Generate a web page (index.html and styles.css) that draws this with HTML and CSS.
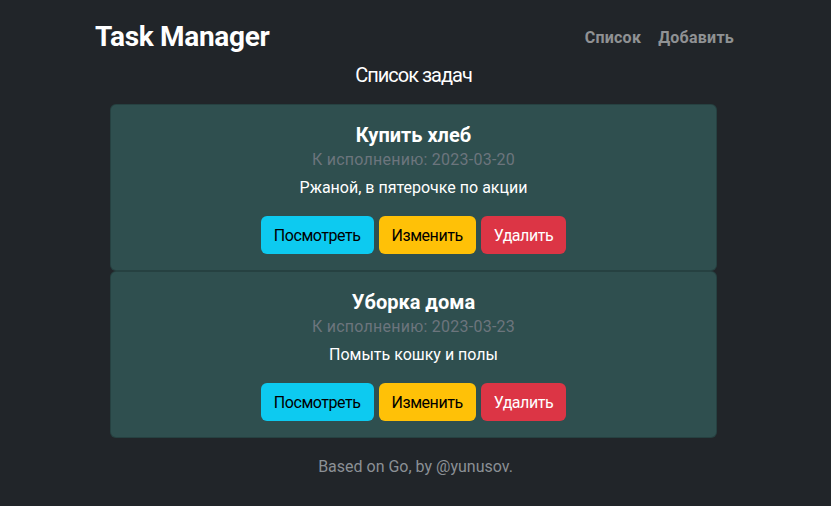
FILE: index.html
```html
<!DOCTYPE html>
<html lang="ru">
<head>
<meta charset="utf-8">
<title>Task Manager</title>
<link rel="stylesheet" href="styles.css">
</head>
<body>
<header class="navbar">
  <a class="brand" href="#">Task Manager</a>
  <nav class="nav">
    <a class="nav-link" href="#">Список</a>
    <a class="nav-link" href="#">Добавить</a>
  </nav>
</header>
<main class="content">
  <h2 class="page-title">Список задач</h2>
  <div class="card">
    <div class="card-body">
      <h5 class="card-title">Купить хлеб</h5>
      <h6 class="card-subtitle">К исполнению: 2023-03-20</h6>
      <p class="card-text">Ржаной, в пятерочке по акции</p>
      <div class="actions">
        <a class="btn btn-info" href="#">Посмотреть</a>
        <a class="btn btn-warning" href="#">Изменить</a>
        <a class="btn btn-danger" href="#">Удалить</a>
      </div>
    </div>
  </div>
  <div class="card">
    <div class="card-body">
      <h5 class="card-title">Уборка дома</h5>
      <h6 class="card-subtitle">К исполнению: 2023-03-23</h6>
      <p class="card-text">Помыть кошку и полы</p>
      <div class="actions">
        <a class="btn btn-info" href="#">Посмотреть</a>
        <a class="btn btn-warning" href="#">Изменить</a>
        <a class="btn btn-danger" href="#">Удалить</a>
      </div>
    </div>
  </div>
</main>
<footer class="footer">Based on Go, by @yunusov.</footer>
</body>
</html>
```
FILE: styles.css
```css
* { box-sizing: border-box; }
html, body { margin: 0; padding: 0; }
body {
  background: #212529;
  color: #dee2e6;
  font-family: Roboto, "Noto Sans", sans-serif;
  font-size: 16px;
  line-height: 1.5;
  min-height: 506px;
}
a { text-decoration: none; }
.navbar {
  display: flex;
  align-items: center;
  justify-content: space-between;
  padding: 20px 97px 0 95px;
}
.brand {
  color: #fff;
  font-size: 28px;
  font-weight: 700;
  line-height: 34px;
  letter-spacing: -0.3px;
}
.nav {
  display: flex;
  gap: 17px;
  padding-top: 2px;
}
.nav-link {
  color: rgba(255,255,255,.5);
  font-weight: 700;
  line-height: 24px;
  letter-spacing: 0.25px;
}
.content {
  width: 607px;
  margin-left: calc(50% - 305.5px);
}
.page-title {
  margin: 9px 0 17px;
  text-align: center;
  color: #fff;
  font-size: 20px;
  font-weight: 400;
  line-height: 24px;
  letter-spacing: -1px;
}
.card {
  background: #2f4f4f;
  border: 1px solid rgba(0,0,0,.175);
  border-radius: 6px;
  text-align: center;
}
.card-body { padding: 16px; }
.card-title {
  margin: 2px 0 7px;
  color: #fff;
  font-size: 20px;
  font-weight: 700;
  line-height: 24px;
}
.card-subtitle {
  margin: -4px 0 7px;
  color: #6c757d;
  font-size: 16px;
  font-weight: 400;
  line-height: 19px;
  letter-spacing: 0.25px;
}
.card-text {
  margin: 0 0 16px;
  color: #fff;
}
.actions {
  display: flex;
  justify-content: center;
  gap: 5px;
}
.btn {
  display: inline-block;
  padding: 7px 12px 5px;
  border-radius: 6px;
  font-size: 16px;
  line-height: 24px;
  letter-spacing: -0.45px;
  border: 1px solid transparent;
}
.btn-info { background: #0dcaf0; color: #000; }
.btn-warning { background: #ffc107; color: #000; }
.btn-danger { background: #dc3545; color: #fff; }
.footer {
  margin-top: 17px;
  text-align: center;
  color: #8b9095;
}
```
